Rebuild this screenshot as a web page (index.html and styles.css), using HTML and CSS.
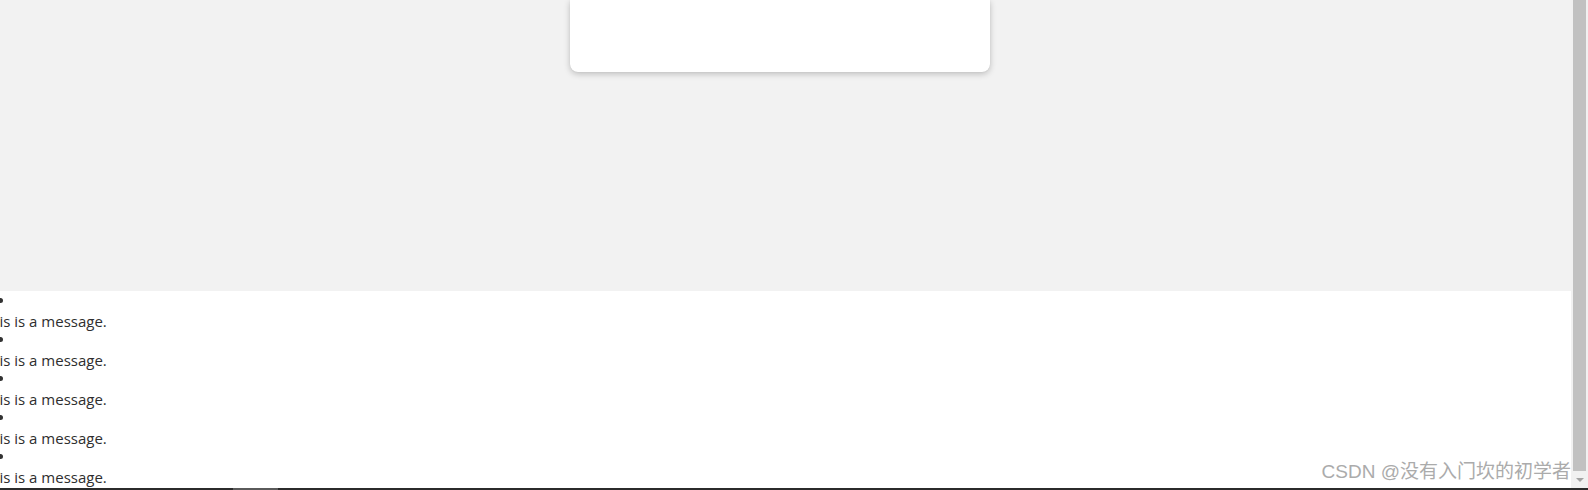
FILE: index.html
```html
<!DOCTYPE html>
<html lang="en">
<head>
<meta charset="utf-8">
<title>Messages</title>
<link rel="stylesheet" href="styles.css">
</head>
<body>
<div class="window">
  <div class="viewport">
    <main class="page">
      <section class="stage">
        <div class="card"></div>
      </section>
      <ul class="messages">
        <li class="msg"><span class="dot"></span><p class="text">This is a message.</p></li>
        <li class="msg"><span class="dot"></span><p class="text">This is a message.</p></li>
        <li class="msg"><span class="dot"></span><p class="text">This is a message.</p></li>
        <li class="msg"><span class="dot"></span><p class="text">This is a message.</p></li>
        <li class="msg"><span class="dot"></span><p class="text">This is a message.</p></li>
      </ul>
      <div class="watermark">CSDN @没有入门坎的初学者</div>
    </main>
    <div class="scrollbar">
      <div class="thumb"></div>
      <div class="arrow"><span class="tri"></span></div>
    </div>
  </div>
  <div class="taskbar"><span class="seg"></span></div>
</div>
</body>
</html>
```
FILE: styles.css
```css
html, body {
  margin: 0;
  padding: 0;
  height: 100%;
  overflow: hidden;
  background: #ffffff;
}
.window {
  display: flex;
  flex-direction: column;
  height: 490px;
  width: 1588px;
}
.viewport {
  display: flex;
  flex: 1;
  min-height: 0;
}
.page {
  position: relative;
  flex: 1;
  overflow: hidden;
  background: #ffffff;
}
.stage {
  height: 291px;
  background: #f2f2f2;
  display: flex;
  justify-content: center;
  padding-right: 11px;
}
.card {
  width: 420px;
  height: 72px;
  background: #ffffff;
  border-radius: 0 0 8px 8px;
  box-shadow: 0 2px 6px rgba(0, 0, 0, 0.22), 0 0 1px rgba(0, 0, 0, 0.12);
}
.messages {
  list-style: none;
  margin: 0;
  padding: 0;
  font-family: "Open Sans", "Noto Sans", sans-serif;
  font-size: 15px;
  color: #2e2e2e;
}
.msg {
  display: flex;
  flex-direction: column;
  height: 39px;
}
.dot {
  display: block;
  flex: none;
  width: 5px;
  height: 5px;
  border-radius: 50%;
  background: #333333;
  margin: 7px 0 7px -2.5px;
}
.text {
  flex: none;
  margin: 0 0 0 -18px;
  line-height: 22px;
  white-space: nowrap;
}
.watermark {
  position: absolute;
  right: 0;
  bottom: 4px;
  font-family: "Liberation Sans", "Noto Sans CJK SC", sans-serif;
  font-size: 19px;
  line-height: 24px;
  color: #ababab;
  white-space: nowrap;
}
.scrollbar {
  width: 17px;
  background: #f1f1f1;
  display: flex;
  flex-direction: column;
  align-items: center;
}
.thumb {
  width: 13px;
  flex: 1;
  background: #c1c1c1;
}
.arrow {
  height: 17px;
  width: 17px;
  display: flex;
  align-items: center;
  justify-content: center;
}
.tri {
  width: 0;
  height: 0;
  border-left: 4px solid transparent;
  border-right: 4px solid transparent;
  border-top: 4px solid #a3a3a3;
}
.taskbar {
  height: 2px;
  background: #2b2b2b;
  display: flex;
  padding-left: 233px;
}
.seg {
  width: 45px;
  background: #5a5a5a;
}
```
